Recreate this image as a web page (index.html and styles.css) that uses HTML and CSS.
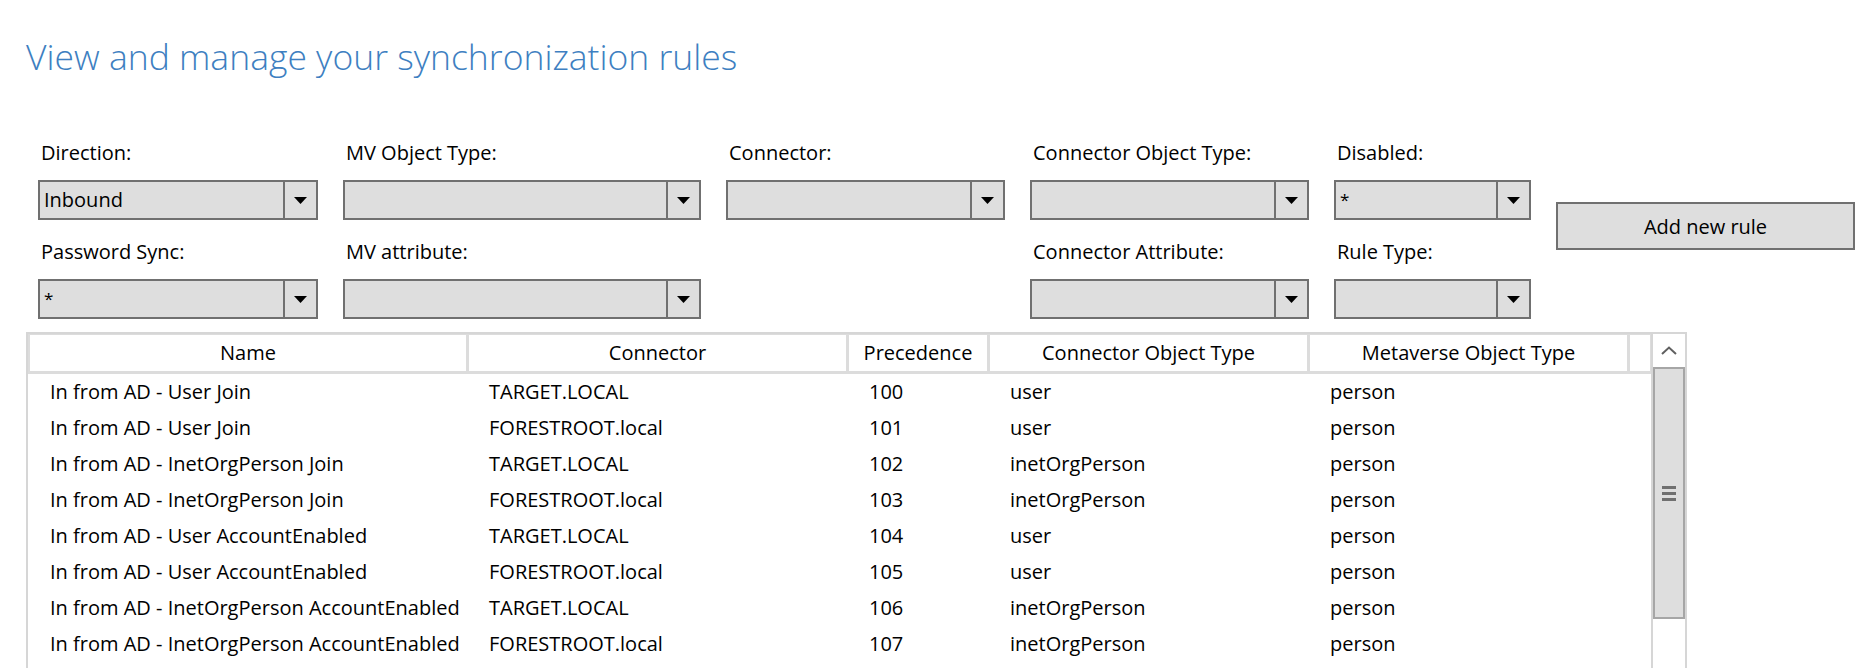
FILE: index.html
```html
<!DOCTYPE html>
<html lang="en">
<head>
<meta charset="utf-8">
<title>Synchronization Rules Editor</title>
<link rel="stylesheet" href="styles.css">
</head>
<body>
<h1 class="title">View and manage your synchronization rules</h1>

<div class="filters">
  <div class="field">
    <div class="label">Direction:</div>
    <div class="select"><span class="val">Inbound</span><span class="arrow"><svg width="13" height="7" viewBox="0 0 13 7"><polygon points="0,0 13,0 6.5,7" fill="#000"/></svg></span></div>
  </div>
  <div class="field">
    <div class="label">MV Object Type:</div>
    <div class="select"><span class="val"></span><span class="arrow"><svg width="13" height="7" viewBox="0 0 13 7"><polygon points="0,0 13,0 6.5,7" fill="#000"/></svg></span></div>
  </div>
  <div class="field">
    <div class="label">Connector:</div>
    <div class="select"><span class="val"></span><span class="arrow"><svg width="13" height="7" viewBox="0 0 13 7"><polygon points="0,0 13,0 6.5,7" fill="#000"/></svg></span></div>
  </div>
  <div class="field">
    <div class="label">Connector Object Type:</div>
    <div class="select"><span class="val"></span><span class="arrow"><svg width="13" height="7" viewBox="0 0 13 7"><polygon points="0,0 13,0 6.5,7" fill="#000"/></svg></span></div>
  </div>
  <div class="field">
    <div class="label">Disabled:</div>
    <div class="select"><span class="val star">*</span><span class="arrow"><svg width="13" height="7" viewBox="0 0 13 7"><polygon points="0,0 13,0 6.5,7" fill="#000"/></svg></span></div>
  </div>
  <div class="btn-cell">
    <button class="btn" type="button">Add new rule</button>
  </div>

  <div class="field">
    <div class="label">Password Sync:</div>
    <div class="select"><span class="val star">*</span><span class="arrow"><svg width="13" height="7" viewBox="0 0 13 7"><polygon points="0,0 13,0 6.5,7" fill="#000"/></svg></span></div>
  </div>
  <div class="field">
    <div class="label">MV attribute:</div>
    <div class="select"><span class="val"></span><span class="arrow"><svg width="13" height="7" viewBox="0 0 13 7"><polygon points="0,0 13,0 6.5,7" fill="#000"/></svg></span></div>
  </div>
  <div class="field empty"></div>
  <div class="field">
    <div class="label">Connector Attribute:</div>
    <div class="select"><span class="val"></span><span class="arrow"><svg width="13" height="7" viewBox="0 0 13 7"><polygon points="0,0 13,0 6.5,7" fill="#000"/></svg></span></div>
  </div>
  <div class="field">
    <div class="label">Rule Type:</div>
    <div class="select"><span class="val"></span><span class="arrow"><svg width="13" height="7" viewBox="0 0 13 7"><polygon points="0,0 13,0 6.5,7" fill="#000"/></svg></span></div>
  </div>
</div>

<div class="table">
  <div class="grid">
    <div class="thead">
      <div class="th c-name">Name</div>
      <div class="th c-conn">Connector</div>
      <div class="th c-prec">Precedence</div>
      <div class="th c-cot">Connector Object Type</div>
      <div class="th c-mot">Metaverse Object Type</div>
      <div class="th c-pad"></div>
    </div>
    <div class="tbody">
      <div class="tr"><div class="td r-name">In from AD - User Join</div><div class="td r-conn">TARGET.LOCAL</div><div class="td r-prec">100</div><div class="td r-cot">user</div><div class="td r-mot">person</div></div>
      <div class="tr"><div class="td r-name">In from AD - User Join</div><div class="td r-conn">FORESTROOT.local</div><div class="td r-prec">101</div><div class="td r-cot">user</div><div class="td r-mot">person</div></div>
      <div class="tr"><div class="td r-name">In from AD - InetOrgPerson Join</div><div class="td r-conn">TARGET.LOCAL</div><div class="td r-prec">102</div><div class="td r-cot">inetOrgPerson</div><div class="td r-mot">person</div></div>
      <div class="tr"><div class="td r-name">In from AD - InetOrgPerson Join</div><div class="td r-conn">FORESTROOT.local</div><div class="td r-prec">103</div><div class="td r-cot">inetOrgPerson</div><div class="td r-mot">person</div></div>
      <div class="tr"><div class="td r-name">In from AD - User AccountEnabled</div><div class="td r-conn">TARGET.LOCAL</div><div class="td r-prec">104</div><div class="td r-cot">user</div><div class="td r-mot">person</div></div>
      <div class="tr"><div class="td r-name">In from AD - User AccountEnabled</div><div class="td r-conn">FORESTROOT.local</div><div class="td r-prec">105</div><div class="td r-cot">user</div><div class="td r-mot">person</div></div>
      <div class="tr"><div class="td r-name">In from AD - InetOrgPerson AccountEnabled</div><div class="td r-conn">TARGET.LOCAL</div><div class="td r-prec">106</div><div class="td r-cot">inetOrgPerson</div><div class="td r-mot">person</div></div>
      <div class="tr"><div class="td r-name">In from AD - InetOrgPerson AccountEnabled</div><div class="td r-conn">FORESTROOT.local</div><div class="td r-prec">107</div><div class="td r-cot">inetOrgPerson</div><div class="td r-mot">person</div></div>
    </div>
  </div>
  <div class="vscroll">
    <div class="sb-up"><svg width="16" height="9" viewBox="0 0 16 9"><polyline points="1,8 8,1.5 15,8" fill="none" stroke="#606060" stroke-width="2"/></svg></div>
    <div class="sb-thumb"><span class="grip"></span><span class="grip"></span><span class="grip"></span></div>
    <div class="sb-track"></div>
  </div>
</div>
</body>
</html>
```

FILE: styles.css
```css
html, body {
  margin: 0;
  padding: 0;
  background: #ffffff;
  overflow: hidden;
}

body {
  padding-left: 26px;
  font-family: "Open Sans", "Noto Sans", "Liberation Sans", sans-serif;
  font-size: 20px;
  color: #000000;
  height: 668px;
  box-sizing: border-box;
}

.title {
  margin: 0;
  padding-top: 34px;
  font-size: 35.5px;
  line-height: 44px;
  font-weight: 300;
  color: #3e7fc1;
  white-space: nowrap;
}

.filters {
  margin-top: 61px;
  margin-left: 12px;
  display: grid;
  grid-template-columns: 280px 358px 279px 279px 197px 299px;
  column-gap: 25px;
  row-gap: 18px;
}

.field .label {
  height: 27px;
  line-height: 27px;
  padding-left: 3px;
  margin-bottom: 14px;
  white-space: nowrap;
}

.select {
  height: 40px;
  box-sizing: border-box;
  border: 2px solid #707070;
  background: #dedede;
  display: flex;
}

.select .val {
  flex: 1;
  padding-left: 4px;
  line-height: 35px;
}

.select .val.star {
  font-size: 17px;
}

.select .arrow {
  width: 31px;
  border-left: 2px solid #707070;
  display: flex;
  align-items: center;
  justify-content: center;
}

.btn-cell {
  grid-row: 1 / span 2;
  grid-column: 6;
  align-self: start;
  margin-top: 63px;
}

.btn {
  width: 100%;
  height: 48px;
  box-sizing: border-box;
  border: 2px solid #707070;
  background: #dedede;
  font-family: inherit;
  font-size: 20px;
  color: #000;
  padding: 0;
}

.table {
  margin-top: 13px;
  width: 1661px;
  height: 400px;
  box-sizing: border-box;
  border: 2px solid #d6d6d6;
  border-bottom: none;
  display: flex;
}

.grid {
  flex: 1;
  min-width: 0;
}

.thead {
  display: flex;
  gap: 3px;
  background: #dcdcdc;
  padding: 1px 0 3px 2px;
}

.th {
  background: #ffffff;
  height: 36px;
  line-height: 36px;
  text-align: center;
  white-space: nowrap;
}

.c-name { width: 436px; }
.c-conn { width: 377px; }
.c-prec { width: 138px; }
.c-cot { width: 317px; }
.c-mot { width: 317px; }
.c-pad { width: 20px; }

.tbody {
  padding-left: 2px;
}

.tr {
  display: flex;
  height: 36px;
  line-height: 36px;
}

.td {
  padding-left: 20px;
  box-sizing: border-box;
  white-space: nowrap;
  overflow: hidden;
}

.r-name { width: 439px; }
.r-conn { width: 380px; }
.r-prec { width: 141px; }
.r-cot { width: 320px; }
.r-mot { width: 320px; }

.vscroll {
  width: 34px;
  box-sizing: border-box;
  border-left: 2px solid #d6d6d6;
  display: flex;
  flex-direction: column;
}

.sb-up {
  height: 33px;
  display: flex;
  align-items: center;
  justify-content: center;
  background: #ffffff;
}

.sb-thumb {
  height: 252px;
  box-sizing: border-box;
  border: 2px solid #a6a6a6;
  background: #dedede;
  display: flex;
  flex-direction: column;
  align-items: center;
  justify-content: center;
  gap: 3px;
}

.grip {
  display: block;
  width: 14px;
  height: 3px;
  background: #707070;
}

.sb-track {
  flex: 1;
  background: #ffffff;
}
```
